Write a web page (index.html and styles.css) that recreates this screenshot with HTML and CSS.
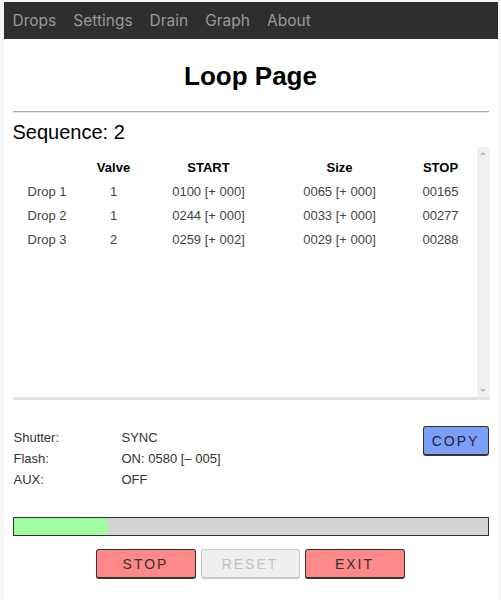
FILE: index.html
```html
<!DOCTYPE html>
<html>

<head>
    <meta charset='utf-8'>
    <title>Loop Page</title>
    <meta name='viewport' content='width=device-width, initial-scale=1'>
    <link rel="stylesheet" href="styles.css">
</head>

<body>
    <div class="page">
        <nav class="topnav">
            <a href="#">Drops</a>
            <a href="#">Settings</a>
            <a href="#">Drain</a>
            <a href="#">Graph</a>
            <a href="#">About</a>
        </nav>

        <h1 class="title">Loop Page</h1>
        <hr class="rule">

        <h2 class="sequence">Sequence: 2</h2>

        <div class="drops-box">
            <div class="drops">
                <div class="row head">
                    <span></span>
                    <span>Valve</span>
                    <span>START</span>
                    <span>Size</span>
                    <span>STOP</span>
                </div>
                <div class="row">
                    <span class="name">Drop 1</span>
                    <span>1</span>
                    <span>0100 [+ 000]</span>
                    <span>0065 [+ 000]</span>
                    <span>00165</span>
                </div>
                <div class="row">
                    <span class="name">Drop 2</span>
                    <span>1</span>
                    <span>0244 [+ 000]</span>
                    <span>0033 [+ 000]</span>
                    <span>00277</span>
                </div>
                <div class="row">
                    <span class="name">Drop 3</span>
                    <span>2</span>
                    <span>0259 [+ 002]</span>
                    <span>0029 [+ 000]</span>
                    <span>00288</span>
                </div>
            </div>
            <!-- fake scrollbar track -->
            <div class="scroll">
                <span class="arrow up"></span>
                <span class="arrow down"></span>
            </div>
        </div>

        <div class="outputs">
            <div class="settings">
                <span>Shutter:</span><span>SYNC</span>
                <span>Flash:</span><span>ON: 0580 [&ndash; 005]</span>
                <span>AUX:</span><span>OFF</span>
            </div>
            <button class="btn copy">COPY</button>
        </div>

        <div class="progress">
            <div class="progress-fill" style="width: 20%;"></div>
        </div>

        <div class="controls">
            <button class="btn stop">STOP</button>
            <button class="btn reset" disabled>RESET</button>
            <button class="btn stop">EXIT</button>
        </div>
    </div>
</body>

</html>
```

FILE: styles.css
```css
body,
html {
    margin: 0;
    padding: 0;
    background: #f6f6f6;
    font-family: "Liberation Sans", Arial, sans-serif;
}

.page {
    width: 494px;
    height: 598px;
    margin: 2px auto 0;
    background: #fff;
    box-sizing: border-box;
}

.topnav {
    display: flex;
    gap: 17px;
    height: 37px;
    padding: 0 9px;
    align-items: center;
    background: #2e2e2e;
}

.topnav a {
    color: #9a9a9a;
    text-decoration: none;
    font-size: 15.5px;
    font-family: "Inter", "Liberation Sans", sans-serif;
}

.title {
    margin: 22px 0 0;
    height: 50px;
    text-align: center;
    font-size: 26px;
    font-weight: bold;
}

.rule {
    margin: 0 9px 0 9px;
    border: 0;
    border-top: 1px solid #aaa;
    border-bottom: 1px solid #e4e4e4;
}

.sequence {
    margin: 8px 0 0 9px;
    height: 26px;
    font-size: 20px;
    font-weight: normal;
}

.drops-box {
    display: flex;
    margin: 0 8px 0 9px;
    height: 250px;
    border-bottom: 3px solid #e2e2e2;
}

.drops {
    flex: 1;
    padding-top: 13px;
}

.row {
    display: grid;
    grid-template-columns: 68px 66px 124px 138px 64px;
    height: 24px;
    font-size: 13px;
    color: #444;
}

.row span {
    text-align: center;
}

.row .name {
    text-align: left;
    padding-left: 15px;
}

.row.head {
    color: #000;
    font-weight: bold;
}

.scroll {
    width: 13px;
    background: #f1f1f1;
    display: flex;
    flex-direction: column;
    justify-content: space-between;
    align-items: center;
    padding: 5px 0;
}

.arrow {
    width: 0;
    height: 0;
    border-left: 3px solid transparent;
    border-right: 3px solid transparent;
}

.arrow.up {
    border-bottom: 3px solid #b5b5b5;
}

.arrow.down {
    border-top: 3px solid #b5b5b5;
}

.outputs {
    display: flex;
    justify-content: space-between;
    align-items: flex-start;
    margin: 26px 9px 0 10px;
}

.settings {
    display: grid;
    grid-template-columns: 108px auto;
    grid-auto-rows: 21px;
    padding-top: 4px;
    font-size: 13px;
    color: #333;
}

.btn {
    font-family: "Liberation Sans", Arial, sans-serif;
    font-size: 14px;
    letter-spacing: 2px;
    border-radius: 3px;
    border: 1px solid #333;
    border-bottom-width: 2px;
    padding: 0;
}

.copy {
    width: 66px;
    height: 30px;
    background: #7b9ef6;
    color: #223;
}

.progress {
    margin: 24px 9px 0 9px;
    height: 17px;
    border: 1px solid #333;
    background: #d3d3d3;
}

.progress-fill {
    height: 100%;
    background: #a2fca2;
}

.controls {
    display: flex;
    justify-content: center;
    gap: 5px;
    margin-top: 13px;
    padding-right: 1px;
}

.stop {
    width: 100px;
    height: 30px;
    background: #ff8888;
    color: #333;
}

.reset {
    width: 99px;
    height: 30px;
    background: #efefef;
    color: #c2c2c2;
    border-color: #c8c8c8;
}
```
